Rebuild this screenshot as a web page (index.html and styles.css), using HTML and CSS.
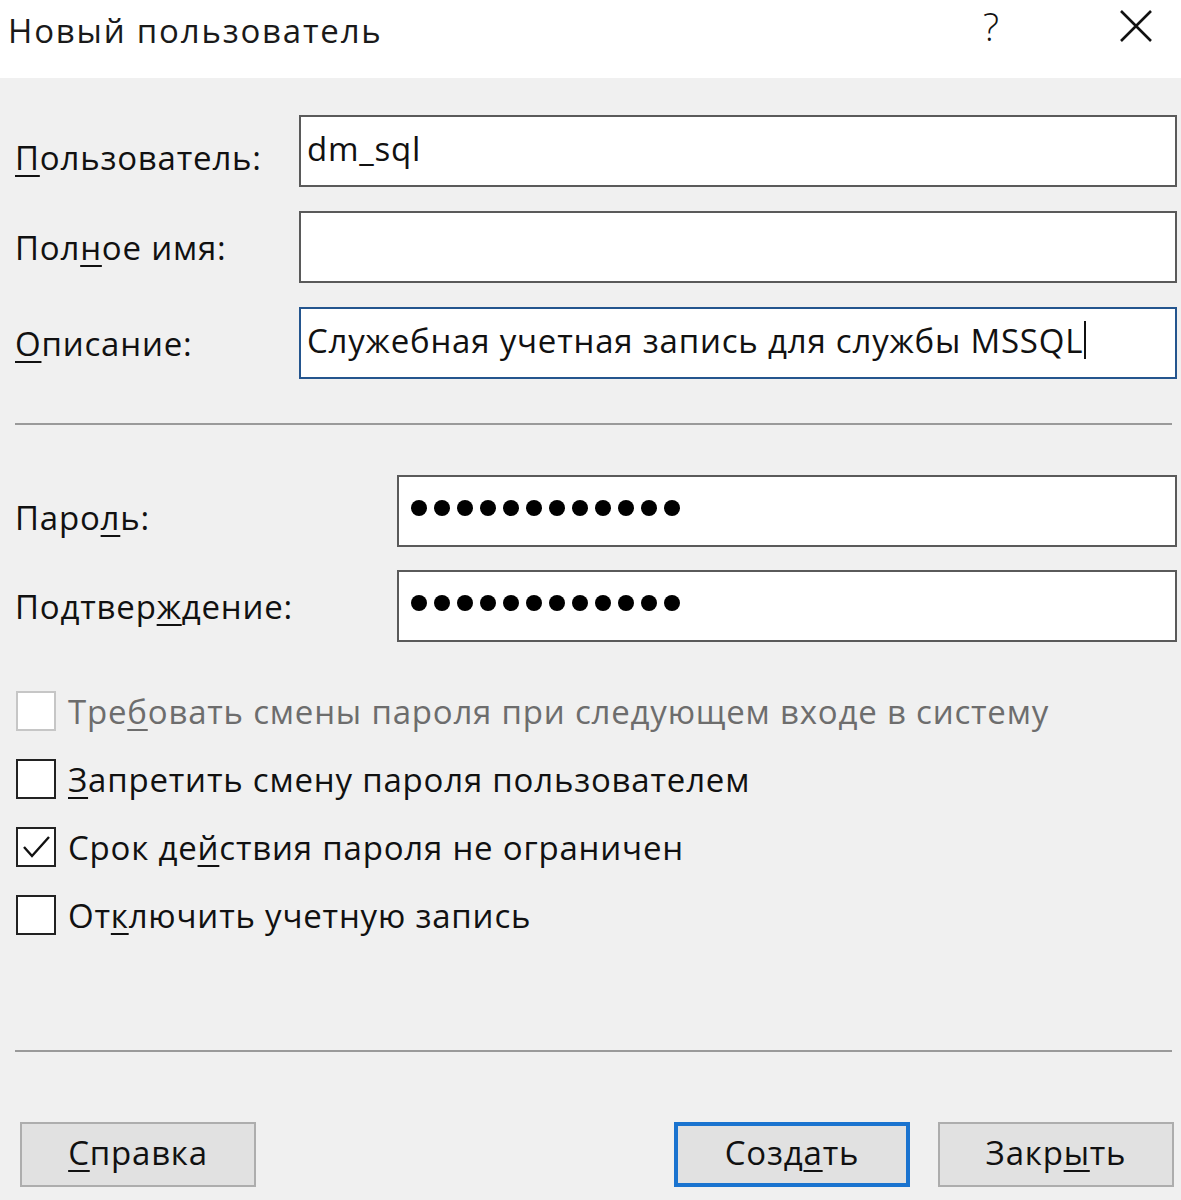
FILE: index.html
```html
<!DOCTYPE html>
<html lang="ru">
<head>
<meta charset="utf-8">
<title>Новый пользователь</title>
<link rel="stylesheet" href="styles.css">
</head>
<body>
<div class="dialog">
  <div class="titlebar">
    <div class="title">Новый пользователь</div>
    <div class="title-actions">
      <span class="help">?</span>
      <svg class="close" width="34" height="34" viewBox="0 0 34 34"><path d="M2 2 L32 32 M32 2 L2 32" stroke="#111" stroke-width="2.6" fill="none"/></svg>
    </div>
  </div>
  <div class="content">
    <div class="group group-top">
      <div class="row">
        <label class="lbl"><u>П</u>ользователь:</label>
        <div class="field">dm_sql</div>
      </div>
      <div class="row">
        <label class="lbl">Пол<u>н</u>ое имя:</label>
        <div class="field"></div>
      </div>
      <div class="row">
        <label class="lbl"><u>О</u>писание:</label>
        <div class="field focused">Служебная учетная запись для службы MSSQL<span class="caret"></span></div>
      </div>
    </div>
    <div class="sep sep-1"></div>
    <div class="group group-pass">
      <div class="row">
        <label class="lbl">Паро<u>л</u>ь:</label>
        <div class="field dots"><span></span><span></span><span></span><span></span><span></span><span></span><span></span><span></span><span></span><span></span><span></span><span></span></div>
      </div>
      <div class="row">
        <label class="lbl">Подтвер<u>ж</u>дение:</label>
        <div class="field dots"><span></span><span></span><span></span><span></span><span></span><span></span><span></span><span></span><span></span><span></span><span></span><span></span></div>
      </div>
    </div>
    <div class="checks">
      <div class="check disabled"><span class="box"></span><span class="ctext">Тре<u>б</u>овать смены пароля при следующем входе в систему</span></div>
      <div class="check"><span class="box"></span><span class="ctext"><u>З</u>апретить смену пароля пользователем</span></div>
      <div class="check"><span class="box"><svg width="36" height="36" viewBox="0 0 36 36"><path d="M6 18 L14 27 L31 8" stroke="#111" stroke-width="2.4" fill="none"/></svg></span><span class="ctext">Срок де<u>й</u>ствия пароля не ограничен</span></div>
      <div class="check"><span class="box"></span><span class="ctext">От<u>к</u>лючить учетную запись</span></div>
    </div>
    <div class="sep sep-2"></div>
    <div class="buttons">
      <button class="btn"><u>С</u>правка</button>
      <div class="btn-right">
        <button class="btn default">Созд<u>а</u>ть</button>
        <button class="btn">Закр<u>ы</u>ть</button>
      </div>
    </div>
  </div>
</div>
</body>
</html>
```
FILE: styles.css
```css
* { box-sizing: border-box; }
html, body { margin: 0; padding: 0; }
body {
  width: 1181px;
  height: 1200px;
  background: #f0f0f0;
  font-family: "Open Sans", "Noto Sans", sans-serif;
  color: #111;
  overflow: hidden;
}
.dialog { width: 1181px; }
.titlebar {
  height: 78px;
  background: #ffffff;
  display: flex;
  align-items: center;
  justify-content: space-between;
  padding: 0 28px 0 8px;
}
.title {
  font-size: 33px;
  font-weight: 400;
  letter-spacing: 1.8px;
  color: #1a1a1a;
  margin-top: -18px;
}
.title-actions {
  display: flex;
  align-items: center;
  gap: 120px;
  margin-top: -26px;
}
.help { font-size: 38px; font-weight: 300; color: #111; }
.content {
  padding: 37px 4px 0 15px;
}
.group { display: flex; flex-direction: column; }
.group-top { gap: 24px; }
.group-pass { gap: 23px; }
.row { display: flex; align-items: center; height: 72px; }
.lbl, .field, .ctext, .btn {
  font-size: 33px;
  letter-spacing: 0.8px;
}
.lbl { color: #111; flex: none; }
.group-top .lbl { width: 284px; }
.group-pass .lbl { width: 382px; }
.row:first-child .lbl { padding-top: 12px; }
u { text-decoration-thickness: 2px; text-underline-offset: 5px; }
.field {
  flex: 1;
  height: 72px;
  background: #fff;
  border: 2px solid #5a5a5a;
  display: flex;
  align-items: center;
  padding: 0 0 6px 6px;
  white-space: nowrap;
}
.field.focused { border-color: #24558e; }
.caret {
  display: inline-block;
  width: 2px;
  height: 38px;
  background: #111;
  margin-left: 1px;
}
.sep { height: 2px; background: #9a9a9a; margin-right: 5px; }
.sep-1 { margin-top: 44px; margin-bottom: 50px; }
.dots { gap: 7px; padding: 0 0 6px 12px; }
.dots span {
  width: 16px; height: 16px; border-radius: 50%; background: #000; flex: none;
}
.checks {
  margin-top: 49px;
  display: flex;
  flex-direction: column;
  gap: 28px;
}
.check { display: flex; align-items: center; gap: 12px; height: 40px; }
.box {
  width: 40px; height: 40px; margin-left: 1px;
  border: 2px solid #222;
  background: #fff;
  display: flex; align-items: center; justify-content: center;
  flex: none;
}
.ctext { color: #111; }
.check.disabled .box { border-color: #c6c6c6; }
.check.disabled .ctext { color: #6d6d6d; }
.sep-2 { margin-top: 115px; }
.buttons {
  margin-top: 70px;
  display: flex;
  justify-content: space-between;
  padding: 0 3px 0 5px;
}
.btn-right { display: flex; gap: 28px; }
.btn {
  width: 236px;
  height: 65px;
  background: #e1e1e1;
  border: 2px solid #adadad;
  font-family: "Open Sans", "Noto Sans", sans-serif;
  color: #111;
  padding: 0 0 4px 0;
}
.btn.default { border: 4px solid #1a73cf; }
```
